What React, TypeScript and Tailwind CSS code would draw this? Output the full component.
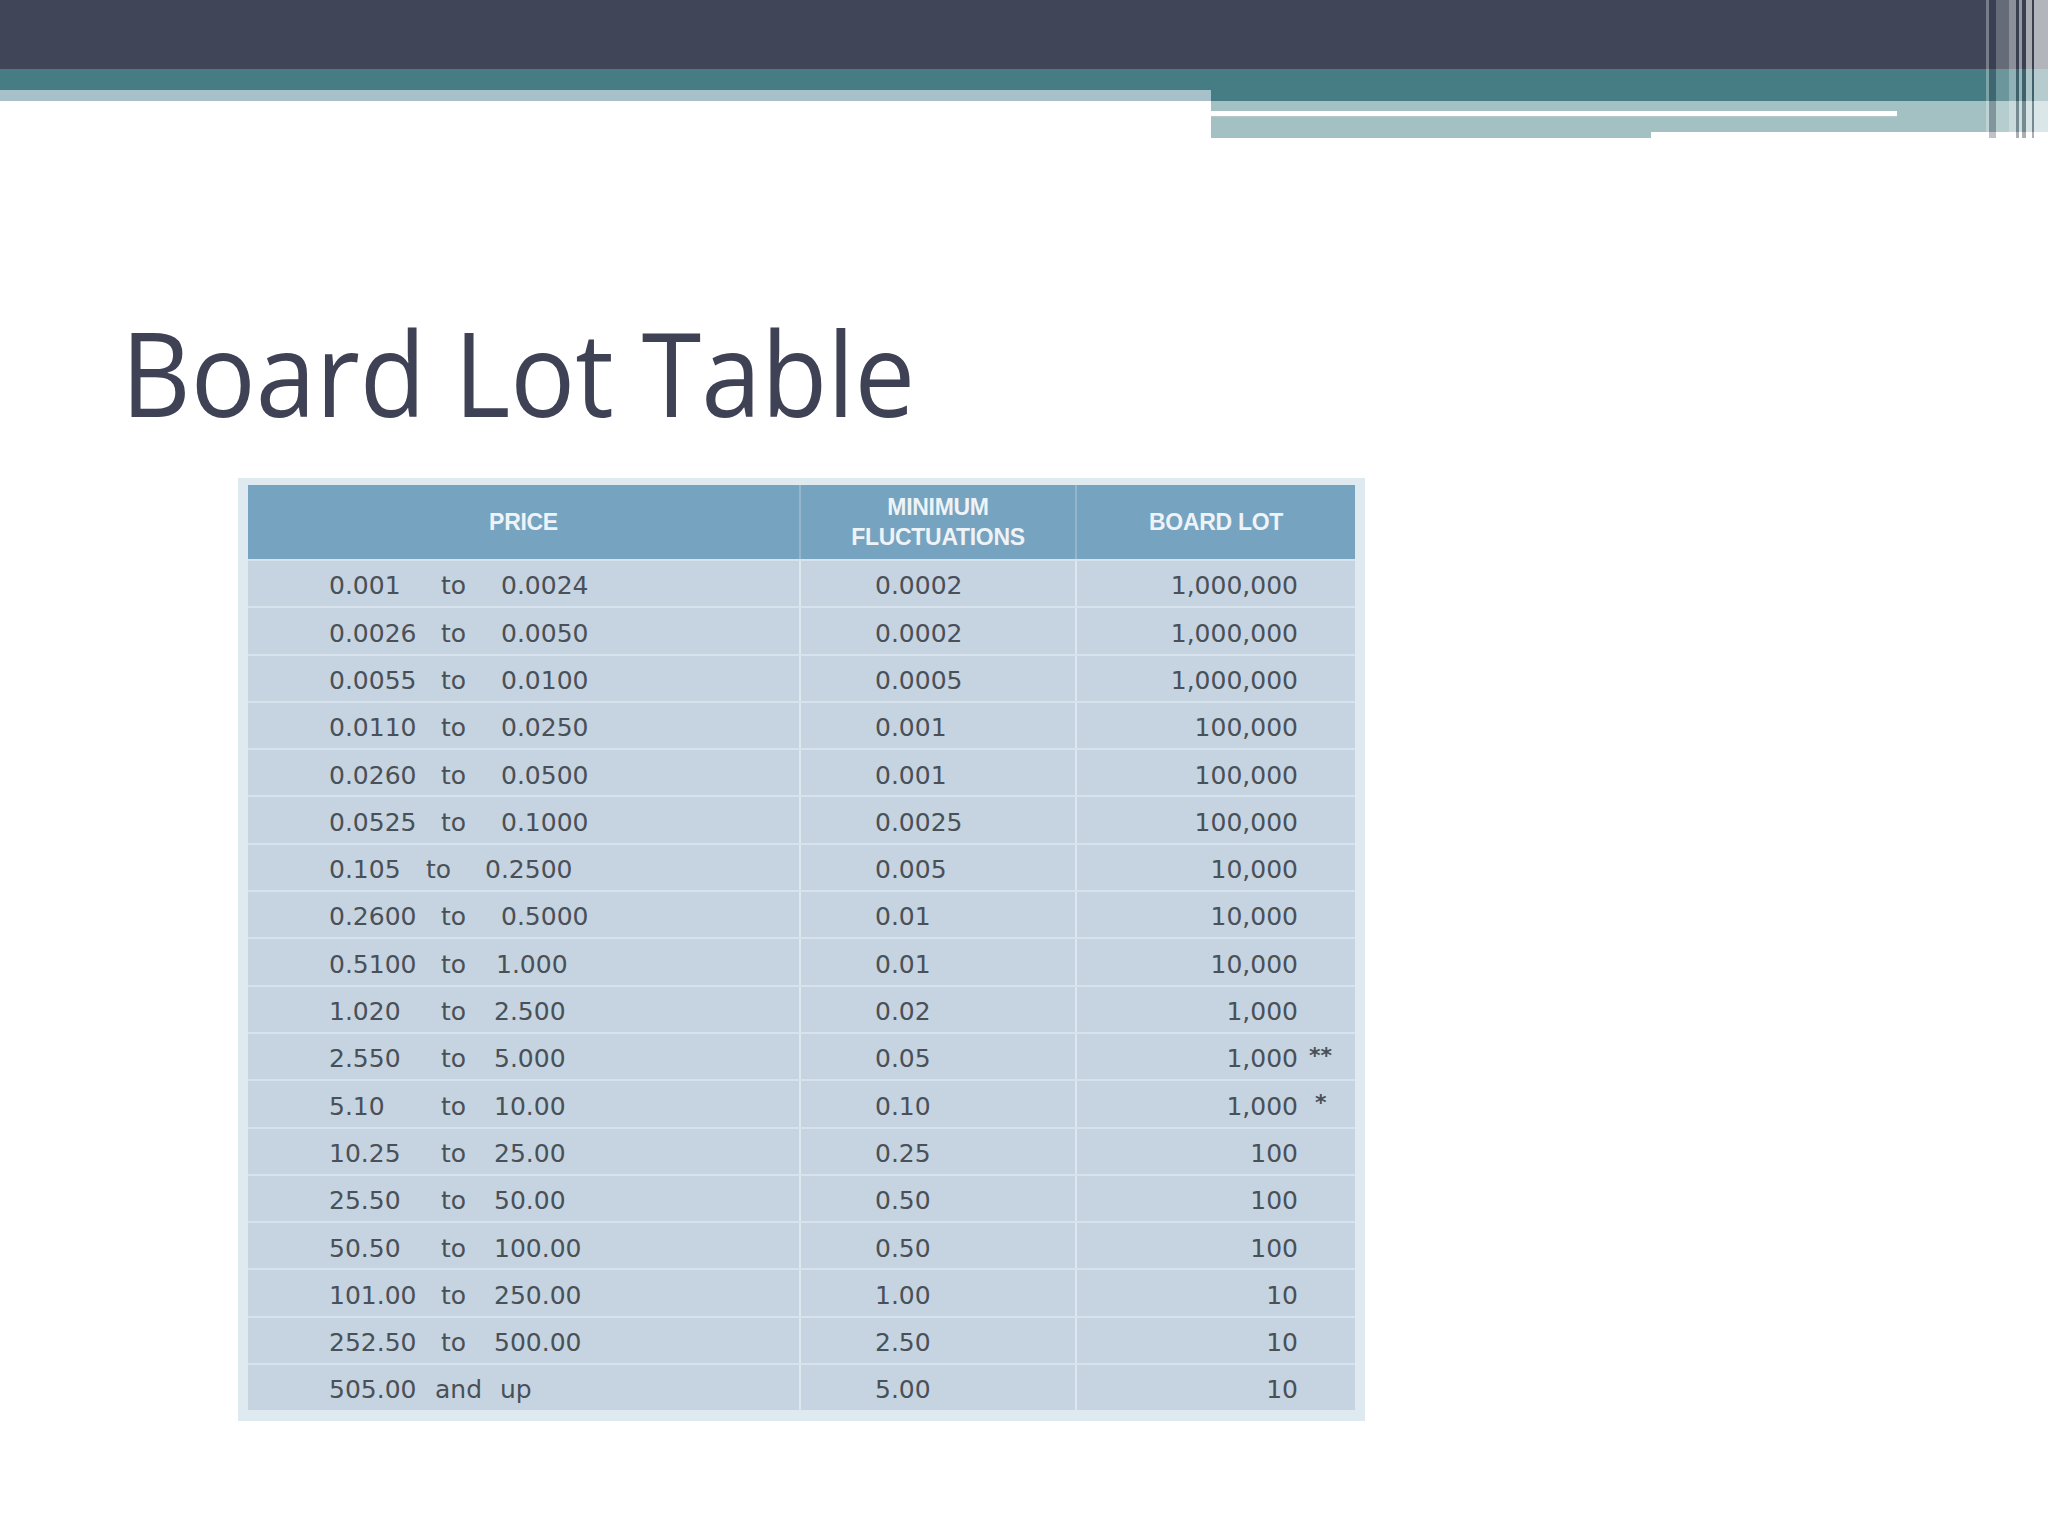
import React from 'react';

type Row = {
  from: string;
  mid: string;
  to: string;
  fromCls: string;
  midCls: string;
  fluct: string;
  lot: string;
  mark?: string;
};

const rows: Row[] = [
  { from: '0.001', mid: 'to', to: '0.0024', fromCls: 'w-[112px]', midCls: 'w-[60px]', fluct: '0.0002', lot: '1,000,000' },
  { from: '0.0026', mid: 'to', to: '0.0050', fromCls: 'w-[112px]', midCls: 'w-[60px]', fluct: '0.0002', lot: '1,000,000' },
  { from: '0.0055', mid: 'to', to: '0.0100', fromCls: 'w-[112px]', midCls: 'w-[60px]', fluct: '0.0005', lot: '1,000,000' },
  { from: '0.0110', mid: 'to', to: '0.0250', fromCls: 'w-[112px]', midCls: 'w-[60px]', fluct: '0.001', lot: '100,000' },
  { from: '0.0260', mid: 'to', to: '0.0500', fromCls: 'w-[112px]', midCls: 'w-[60px]', fluct: '0.001', lot: '100,000' },
  { from: '0.0525', mid: 'to', to: '0.1000', fromCls: 'w-[112px]', midCls: 'w-[60px]', fluct: '0.0025', lot: '100,000' },
  { from: '0.105', mid: 'to', to: '0.2500', fromCls: 'w-[97px]', midCls: 'w-[59px]', fluct: '0.005', lot: '10,000' },
  { from: '0.2600', mid: 'to', to: '0.5000', fromCls: 'w-[112px]', midCls: 'w-[60px]', fluct: '0.01', lot: '10,000' },
  { from: '0.5100', mid: 'to', to: '1.000', fromCls: 'w-[112px]', midCls: 'w-[55px]', fluct: '0.01', lot: '10,000' },
  { from: '1.020', mid: 'to', to: '2.500', fromCls: 'w-[112px]', midCls: 'w-[53px]', fluct: '0.02', lot: '1,000' },
  { from: '2.550', mid: 'to', to: '5.000', fromCls: 'w-[112px]', midCls: 'w-[53px]', fluct: '0.05', lot: '1,000', mark: '**' },
  { from: '5.10', mid: 'to', to: '10.00', fromCls: 'w-[112px]', midCls: 'w-[53px]', fluct: '0.10', lot: '1,000', mark: '*' },
  { from: '10.25', mid: 'to', to: '25.00', fromCls: 'w-[112px]', midCls: 'w-[53px]', fluct: '0.25', lot: '100' },
  { from: '25.50', mid: 'to', to: '50.00', fromCls: 'w-[112px]', midCls: 'w-[53px]', fluct: '0.50', lot: '100' },
  { from: '50.50', mid: 'to', to: '100.00', fromCls: 'w-[112px]', midCls: 'w-[53px]', fluct: '0.50', lot: '100' },
  { from: '101.00', mid: 'to', to: '250.00', fromCls: 'w-[112px]', midCls: 'w-[53px]', fluct: '1.00', lot: '10' },
  { from: '252.50', mid: 'to', to: '500.00', fromCls: 'w-[112px]', midCls: 'w-[53px]', fluct: '2.50', lot: '10' },
  { from: '505.00', mid: 'and', to: 'up', fromCls: 'w-[106px]', midCls: 'w-[65px]', fluct: '5.00', lot: '10' },
];

// stripes at the right end of the top band, laid over the bars
const stripes = [
  'w-[3px] bg-white/30',
  'w-[7px] bg-[#2f3444]/30',
  'w-[13px] bg-white/20',
  'w-[7px] bg-white/40',
  'w-[3px] bg-[#2f3444]/40',
  'w-[3px] bg-white/45',
  'w-[4px] bg-[#2f3444]/40',
  'w-[6px] bg-white/55',
  'w-[2px] bg-[#2f3444]/40',
  'w-[14px] bg-white/60',
];

const TopBand = () => (
  <div className="relative">
    <div className="h-[69px] bg-[#404657]" />
    <div className="h-[21px] bg-[#467d84]" />
    <div className="flex h-[11px]">
      <div className="w-[1211px] bg-[#a6c1c9]" />
      <div className="flex-1 bg-[#467d84]" />
    </div>
    <div className="flex h-[10px]">
      <div className="w-[1211px]" />
      <div className="flex-1 bg-[#a3c1c3]" />
    </div>
    <div className="flex h-[6px]">
      <div className="w-[1211px]" />
      <div className="w-[686px] bg-white border-b border-[#b7c8ca]" />
      <div className="flex-1 bg-[#a3c1c3]" />
    </div>
    <div className="flex h-[15px]">
      <div className="w-[1211px]" />
      <div className="flex-1 bg-[#a3c1c3]" />
    </div>
    <div className="flex h-[6px]">
      <div className="w-[1211px]" />
      <div className="w-[440px] bg-[#a3c1c3]" />
      <div className="flex-1" />
    </div>
    <div className="absolute top-0 right-0 h-[138px] w-[62px] flex">
      {stripes.map((s, i) => (
        <div key={i} className={`h-full ${s}`} />
      ))}
    </div>
  </div>
);

const BoardLotTable = () => (
  <div className="ml-[238px] mt-[47px] w-[1127px] bg-[#dfe9f0] pt-[7px] pl-[10px] pr-[10px] pb-[11px]">
    <div className="grid grid-cols-[553px_276px_278px] h-[74px] bg-[#76a3bf] text-[#eef3f7] font-bold text-[23px] tracking-[-0.3px] leading-[30px] font-['Liberation_Sans',Arial,sans-serif]">
      <div className="flex items-center justify-center border-r-2 border-[#93b6cc]">PRICE</div>
      <div className="flex flex-col items-center justify-center border-r-2 border-[#93b6cc]">
        <span>MINIMUM</span>
        <span>FLUCTUATIONS</span>
      </div>
      <div className="flex items-center justify-center">BOARD LOT</div>
    </div>
    <div className="font-['DejaVu_Sans',Verdana,sans-serif] text-[25px] text-[#4a5057]">
      {rows.map((r, i) => (
        <div key={i} className="grid grid-cols-[553px_276px_278px] h-[47.3px] bg-[#c5d4e0] border-t-2 border-[#d7e3ec]">
          <div className="flex items-center pl-[81px] pt-[5px] border-r-2 border-[#dce7ef]">
            <span className={r.fromCls}>{r.from}</span>
            <span className={r.midCls}>{r.mid}</span>
            <span>{r.to}</span>
          </div>
          <div className="flex items-center pl-[74px] pt-[5px] border-r-2 border-[#dce7ef]">{r.fluct}</div>
          <div className="flex items-center justify-end pt-[5px]">
            <span>{r.lot}</span>
            <span className="w-[57px] self-start pt-[6px] text-[22px] font-bold leading-none">
              {r.mark === '**' && <span className="pl-[11px]">**</span>}
              {r.mark === '*' && <span className="pl-[17px]">*</span>}
            </span>
          </div>
        </div>
      ))}
    </div>
  </div>
);

export default function App() {
  return (
    <div className="min-h-screen w-full bg-white">
      <TopBand />
      <h1 className="mt-[175px] pl-[121px] text-[118px] leading-none text-[#3f4255] font-['Open_Sans',sans-serif] font-normal">
        <span className="inline-block origin-left scale-x-[0.915]">Board Lot Table</span>
      </h1>
      <BoardLotTable />
    </div>
  );
}
